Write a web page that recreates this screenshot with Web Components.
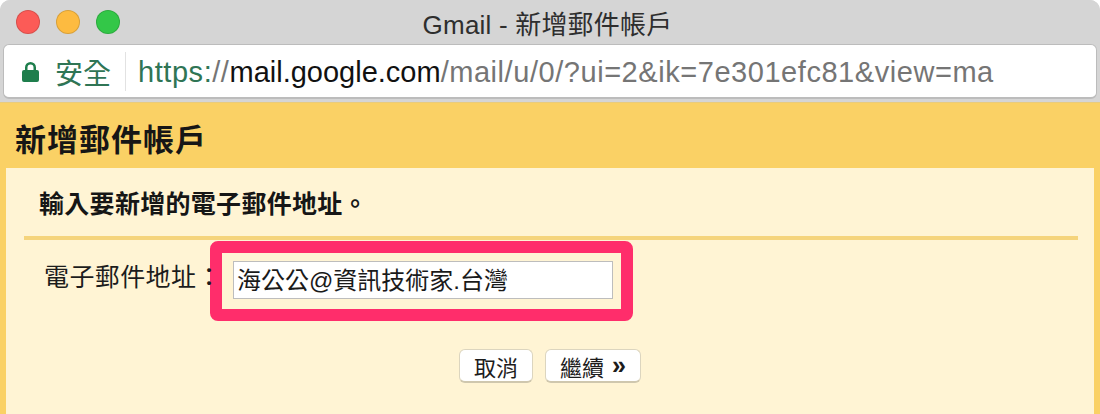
<!DOCTYPE html>
<html lang="zh-Hant">
<head>
<meta charset="utf-8">
<title>Gmail - 新增郵件帳戶</title>
<style>
html, body { margin: 0; height: 100%; overflow: hidden; background: #fff; }
body { font-family: "Liberation Sans", "Noto Sans CJK TC", sans-serif; color: #111; }
</style>
</head>
<body>
<mail-window>
  <title-bar>Gmail - 新增郵件帳戶</title-bar>
  <address-bar></address-bar>
  <dialog-panel heading="新增郵件帳戶">
    <span slot="intro">輸入要新增的電子郵件地址。</span>
    <email-row label="電子郵件地址：">海公公@資訊技術家.台灣</email-row>
    <span slot="actions"><cta-button>取消</cta-button><cta-button>繼續<b style="margin-left:8px;font-size:25px;line-height:25px">»</b></cta-button></span>
  </dialog-panel>
</mail-window>

<script>
const windowTemplate = document.createElement("template");
windowTemplate.innerHTML = `
<style>
:host { display: flex; flex-direction: column; width: 1100px; height: 414px; overflow: hidden; border-radius: 10px 10px 0 0; background: #d5d5d5; }
</style>
<slot></slot>
`;

class MailWindow extends HTMLElement {
  constructor() {
    super();
    this.attachShadow({ mode: "open" });
    this.shadowRoot.appendChild(windowTemplate.content.cloneNode(true));
  }
}

const titleTemplate = document.createElement("template");
titleTemplate.innerHTML = `
<style>
:host { display: grid; grid-template-columns: 1fr auto 1fr; align-items: center; height: 44px; flex: none; background: #d5d5d5; }
.lights { display: flex; gap: 16px; padding-left: 16px; }
.light { width: 22px; height: 22px; border-radius: 50%; border: 1px solid rgba(0,0,0,.14); }
.red { background: #fc5b57; }
.yellow { background: #fdbb40; }
.green { background: #33c748; }
.title { font-size: 26px; color: #2e2e2e; letter-spacing: .2px; padding-right: 5px; }
</style>
<div class="lights">
  <div class="light red"></div>
  <div class="light yellow"></div>
  <div class="light green"></div>
</div>
<div class="title"><slot></slot></div>
<div></div>
`;

class TitleBar extends HTMLElement {
  constructor() {
    super();
    this.attachShadow({ mode: "open" });
    this.shadowRoot.appendChild(titleTemplate.content.cloneNode(true));
  }
}

const addressTemplate = document.createElement("template");
addressTemplate.innerHTML = `
<style>
:host { display: flex; align-items: center; flex: none; box-sizing: border-box; height: 55px; margin: 0 3px 3px; padding: 2px 0 0 18px; background: #fff; border: 1px solid #bcbcbc; border-bottom-width: 2px; border-radius: 6px; font-size: 29px; white-space: nowrap; }
svg { flex: none; width: 17px; height: 21px; margin-top: -2px; }
.secure { color: #2f7555; margin-left: 16px; font-size: 28px; }
.sep { width: 1px; height: 39px; margin: -2px 12px 0 14px; background: #e2e2e2; }
.url { color: #757575; letter-spacing: .55px; }
.scheme { color: #2f7555; letter-spacing: .55px; }
.slashes { letter-spacing: .55px; }
.host { color: #111; letter-spacing: 0; }
</style>
<svg viewBox="0 0 17 21"><path fill="#1e7e4c" d="M3 9V6.5a5.5 5.5 0 0 1 11 0V9h1a2 2 0 0 1 2 2v8a2 2 0 0 1-2 2H2a2 2 0 0 1-2-2v-8a2 2 0 0 1 2-2zm2.5 0h6V6.5a3 3 0 0 0-6 0z"/></svg>
<span class="secure">安全</span>
<span class="sep"></span>
<span class="url"><span class="scheme">https:</span><span class="slashes">//</span><span class="host">mail.google.com</span>/mail/u/0/?ui=2&amp;ik=7e301efc81&amp;view=ma</span>
`;

class AddressBar extends HTMLElement {
  constructor() {
    super();
    this.attachShadow({ mode: "open" });
    this.shadowRoot.appendChild(addressTemplate.content.cloneNode(true));
  }
}

const panelTemplate = document.createElement("template");
panelTemplate.innerHTML = `
<style>
:host { display: flex; flex-direction: column; flex: 1; min-height: 0; background: #fad165; padding: 0 6px; border-top: 1px solid #e9cb7c; }
h1 { margin: 0; height: 65px; padding: 0 0 0 9px; font-size: 31px; line-height: 76px; font-weight: 700; letter-spacing: 1px; color: #161616; flex: none; }
.body { flex: 1; background: #fff4d4; padding: 0 16px 0 18px; }
.intro { height: 72px; box-sizing: border-box; padding: 19px 0 0 15px; font-size: 25px; line-height: 34px; font-weight: 700; letter-spacing: .3px; color: #161616; border-bottom: 4px solid #f5d47c; margin-bottom: 1px; }
.actions { display: flex; justify-content: flex-start; padding: 28px 0 0 435px; }
</style>
<h1 id="heading"></h1>
<div class="body">
  <div class="intro"><slot name="intro"></slot></div>
  <slot></slot>
  <div class="actions"><slot name="actions"></slot></div>
</div>
`;

class DialogPanel extends HTMLElement {
  constructor() {
    super();
    this.attachShadow({ mode: "open" });
    this.shadowRoot.appendChild(panelTemplate.content.cloneNode(true));
  }

  connectedCallback() {
    this.shadowRoot.querySelector("#heading").textContent = this.getAttribute("heading");
  }
}

const rowTemplate = document.createElement("template");
rowTemplate.innerHTML = `
<style>
:host { display: flex; align-items: center; height: 80px; padding-left: 20px; }
.label { position: relative; z-index: 1; flex: none; width: 174px; font-size: 25px; line-height: 34px; margin-top: -8px; letter-spacing: .4px; color: #1c1c1c; white-space: nowrap; }
.mark { flex: none; box-sizing: border-box; width: 423px; height: 80px; margin-left: -8px; padding: 8px 8px 10px 11px; border: 12px solid #ff2d6b; border-radius: 8px; }
.field { box-sizing: border-box; width: 380px; height: 38px; background: #fff; border: 1px solid #bdbdbd; padding-left: 3px; font-size: 24px; line-height: 38px; color: #1a1a1a; white-space: nowrap; }
</style>
<span class="label" id="label"></span>
<div class="mark"><div class="field"><slot></slot></div></div>
`;

class EmailRow extends HTMLElement {
  constructor() {
    super();
    this.attachShadow({ mode: "open" });
    this.shadowRoot.appendChild(rowTemplate.content.cloneNode(true));
  }

  connectedCallback() {
    this.shadowRoot.querySelector("#label").textContent = this.getAttribute("label");
  }
}

const buttonTemplate = document.createElement("template");
buttonTemplate.innerHTML = `
<style>
:host { display: inline-flex; align-items: center; justify-content: center; box-sizing: border-box; height: 34px; padding: 0 14px; margin-right: 12px; background: #fff; border: 1px solid #dcd5bf; border-bottom: 2px solid #cfc7ae; border-radius: 6px; font-size: 22px; color: #1c1c1c; cursor: pointer; white-space: nowrap; vertical-align: top; }
</style>
<slot></slot>
`;

class CtaButton extends HTMLElement {
  constructor() {
    super();
    this.attachShadow({ mode: "open" });
    this.setAttribute("tabindex", "0");
    this.shadowRoot.appendChild(buttonTemplate.content.cloneNode(true));
  }
}

customElements.define("mail-window", MailWindow);
customElements.define("title-bar", TitleBar);
customElements.define("address-bar", AddressBar);
customElements.define("dialog-panel", DialogPanel);
customElements.define("email-row", EmailRow);
customElements.define("cta-button", CtaButton);
</script>
</body>
</html>
